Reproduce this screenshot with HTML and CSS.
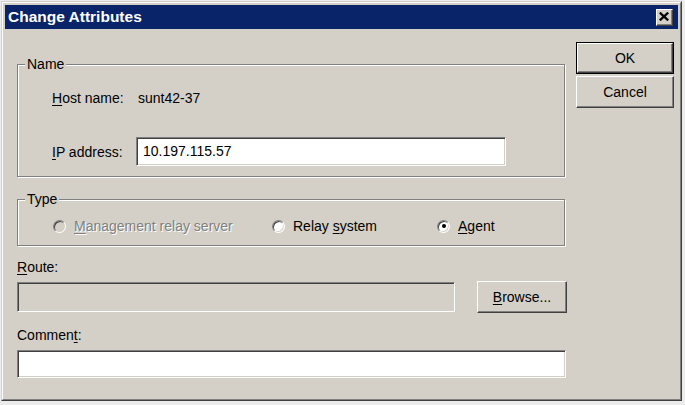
FILE: index.html
```html
<!DOCTYPE html>
<html>
<head>
<meta charset="utf-8">
<link rel="stylesheet" href="styles.css">
</head>
<body>
<div class="window">
  <div class="frame">
    <div class="titlebar">
      <span class="title">Change Attributes</span>
      <span class="close">
        <svg width="10" height="9" viewBox="0 0 10 9"><path d="M0.8 0.6 L9.2 8.4 M9.2 0.6 L0.8 8.4" stroke="#000" stroke-width="2.2" fill="none"/></svg>
      </span>
    </div>
    <div class="content">
      <div class="left">
        <fieldset class="group name-group">
          <legend><span>Name</span></legend>
          <div class="name-grid">
            <div class="lbl"><u>H</u>ost name:</div>
            <div class="val">sunt42-37</div>
            <div class="lbl"><u>I</u>P address:</div>
            <div class="field ip">10.197.115.57</div>
          </div>
        </fieldset>
        <fieldset class="group type-group">
          <legend><span>Type</span></legend>
          <div class="type-grid">
            <div class="opt disabled"><span class="radio"></span><span><u>M</u>anagement relay server</span></div>
            <div class="opt"><span class="radio"></span><span>Relay <u>s</u>ystem</span></div>
            <div class="opt"><span class="radio checked"></span><span><u>A</u>gent</span></div>
          </div>
        </fieldset>
        <div class="label route-label"><u>R</u>oute:</div>
        <div class="route-row">
          <div class="field route"></div>
          <div class="btn browse"><span><u>B</u>rowse...</span></div>
        </div>
        <div class="label comment-label">Commen<u>t</u>:</div>
        <div class="field comment"></div>
      </div>
      <div class="right">
        <div class="default"><div class="btn ok"><span>OK</span></div></div>
        <div class="btn cancel"><span>Cancel</span></div>
      </div>
    </div>
  </div>
</div>
</body>
</html>
```
FILE: styles.css
```css
html, body {
  margin: 0;
  padding: 0;
}
body {
  background: #ececec;
  font-family: "Liberation Sans", Arial, sans-serif;
  font-size: 14px;
  color: #000;
}
u { text-decoration: underline; text-underline-offset: 2px; }
.window {
  margin: 1px 0 0 1px;
  width: 681px;
  height: 400px;
  box-sizing: border-box;
  border: 1px solid;
  border-color: #d4d0c8 #404040 #404040 #d4d0c8;
  background: #d4d0c8;
}
.frame {
  height: 100%;
  box-sizing: border-box;
  border: 1px solid;
  border-color: #fff #808080 #808080 #fff;
  padding: 2px;
}
.titlebar {
  height: 24px;
  background: #0a246a;
  display: flex;
  align-items: center;
  justify-content: space-between;
  padding: 0 5px 0 3px;
}
.title {
  color: #fff;
  font-weight: bold;
  font-size: 15.5px;
  line-height: 18px;
}
.close {
  width: 17px;
  height: 17px;
  box-sizing: border-box;
  background: #d4d0c8;
  border: 1px solid;
  border-color: #fff #404040 #404040 #fff;
  box-shadow: inset -1px -1px #808080;
  display: flex;
  align-items: center;
  justify-content: center;
  padding-right: 1px;
  padding-bottom: 1px;
}
.close svg { display: block; }
.content {
  display: flex;
  gap: 9px;
  padding: 13px 3px 0 12px;
}
.left {
  width: 550px;
  margin-top: 14px;
  display: flex;
  flex-direction: column;
  align-items: flex-start;
}
.group {
  margin: 0;
  padding: 0;
  width: 548px;
  box-sizing: border-box;
  border: 1px solid #808080;
  box-shadow: inset 1px 1px #fff, 1px 1px #fff;
  min-inline-size: 0;
}
.group legend {
  padding: 0 2px;
  margin-left: 7px;
  line-height: 16px;
  background: #d4d0c8;
}
.name-grid {
  display: grid;
  grid-template-columns: 84px 370px;
  grid-template-rows: 20px 29px;
  row-gap: 29px;
  align-items: center;
  padding: 16px 0 10px 34px;
}
.val { padding-left: 2px; }
.field {
  box-sizing: border-box;
  border: 1px solid;
  border-color: #808080 #fff #fff #808080;
  box-shadow: inset 1px 1px #404040, inset -1px -1px #d4d0c8;
  background: #fff;
}
.ip {
  height: 29px;
  line-height: 27px;
  padding-left: 6px;
}
.type-group { margin-top: 14px; }
.type-grid {
  display: grid;
  grid-template-columns: 219px 165px auto;
  align-items: center;
  height: 20px;
  padding: 9px 0 9px 35px;
}
.opt {
  display: flex;
  align-items: center;
  gap: 8px;
}
.radio {
  width: 13px;
  height: 13px;
  box-sizing: border-box;
  border-radius: 50%;
  border: 1px solid;
  border-color: #808080 #fff #fff #808080;
  box-shadow: inset 1px 1px #404040, inset -1px -1px #d4d0c8;
  background: #fff;
  display: flex;
  align-items: center;
  justify-content: center;
}
.radio.checked::after {
  content: "";
  width: 4px;
  height: 4px;
  border-radius: 50%;
  background: #000;
}
.opt.disabled { color: #808080; text-shadow: 1px 1px #fff; }
.opt.disabled .radio { background: #d4d0c8; }
.label { line-height: 16px; }
.route-label { margin-top: 13px; }
.route-row {
  margin-top: 6px;
  width: 550px;
  height: 32px;
  display: flex;
  align-items: center;
  justify-content: space-between;
}
.route {
  width: 438px;
  height: 30px;
  background: #d4d0c8;
}
.btn {
  box-sizing: border-box;
  border: 1px solid;
  border-color: #fff #404040 #404040 #fff;
  box-shadow: inset -1px -1px #808080;
  display: flex;
  align-items: center;
  justify-content: center;
  background: #d4d0c8;
}
.browse {
  width: 90px;
  height: 32px;
}
.comment-label { margin-top: 14px; }
.comment {
  margin-top: 7px;
  width: 549px;
  height: 28px;
}
.right {
  width: 98px;
  display: flex;
  flex-direction: column;
  gap: 2px;
}
.default {
  height: 32px;
  box-sizing: border-box;
  border: 1px solid #000;
}
.ok {
  height: 100%;
}
.cancel {
  height: 32px;
}
```
